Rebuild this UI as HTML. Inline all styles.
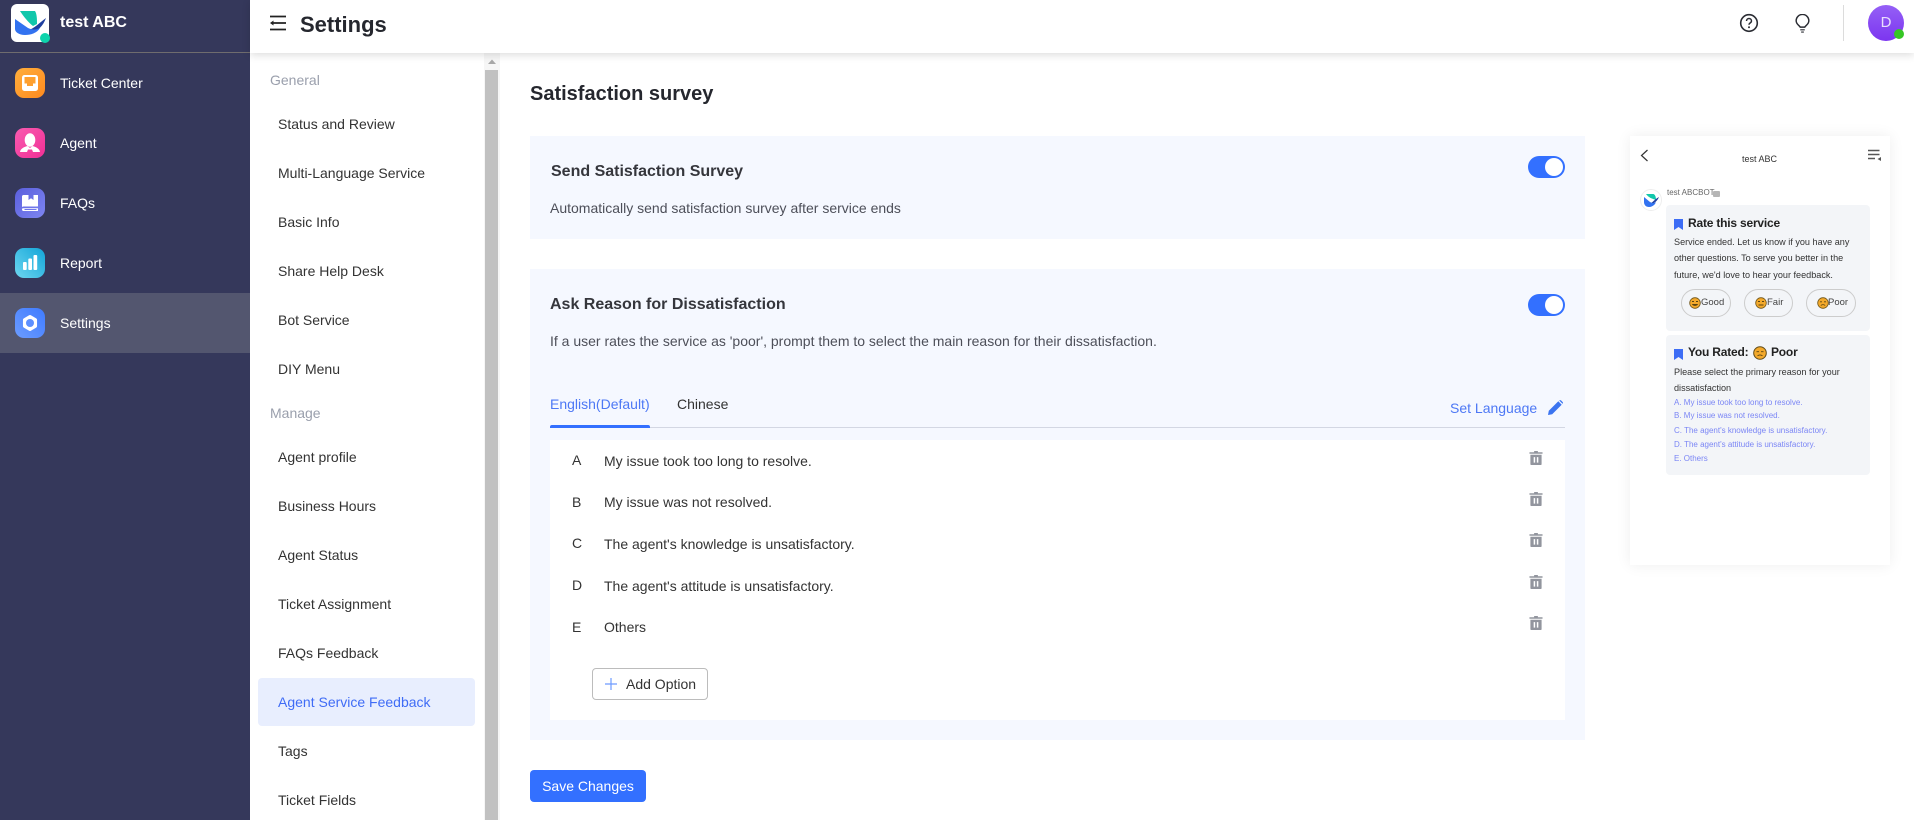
<!DOCTYPE html>
<html><head><meta charset="utf-8"><title>Settings</title>
<style>
*{box-sizing:border-box}
html,body{margin:0;padding:0;width:1914px;height:820px;overflow:hidden;background:#fff;font-family:"Liberation Sans",sans-serif;font-size:14px;color:#333}
.a{position:absolute}
.t{position:absolute;white-space:nowrap;line-height:20px}
.ic{position:absolute;left:15px;width:30px;height:30px;border-radius:9px}
.ic svg{display:block}
.nav{position:absolute;left:60px;color:#fff;font-size:14px;line-height:20px;white-space:nowrap}
.sub{position:absolute;left:278px;color:#333;line-height:20px;white-space:nowrap}
.grp{position:absolute;left:270px;color:#9a9fac;line-height:20px}
.sw{position:absolute;left:1528px;width:37px;height:22px;border-radius:11px;background:#3370ff}
.sw i{position:absolute;right:2px;top:2px;width:18px;height:18px;border-radius:50%;background:#fff}
.l{position:absolute;left:572px;line-height:20px;color:#333}
.o{position:absolute;left:604px;line-height:20px;color:#333;white-space:nowrap}
.tr{position:absolute;left:1529px}
.pt{position:absolute;left:1674px;font-size:9.1px;line-height:12px;color:#333;white-space:nowrap}
.po{position:absolute;left:1674px;font-size:8px;line-height:12px;color:#7b86f5;white-space:nowrap}
.pb{position:absolute;top:289px;height:27.5px;border:1px solid #ccc;border-radius:14px}
</style></head><body>

<div class="a" style="left:0;top:0;width:250px;height:820px;background:#35385b"></div>
<div class="a" style="left:0;top:52px;width:250px;height:1px;background:#6f6c6e"></div>
<div class="a" style="left:0;top:293px;width:250px;height:60px;background:#53566f"></div>

<svg class="a" style="left:11px;top:4px" width="40" height="42" viewBox="0 0 40 42">
<rect x="0" y="0" width="38" height="38" rx="6" fill="#fff"/>
<path d="M9 7H24C26 10 26 16 26 20L22 22C17 18 13 13 9 7Z" fill="#11c7ab"/>
<path d="M35 14C32 22 27 27 20 29L16 26C22 26 28 19 35 14Z" fill="#1f3f9f"/>
<path d="M4 15L17 24C21 26 25 26 29 24C26 29 20 31 14 31C8 31 4 28 4 25Z" fill="#3272f0"/>
<circle cx="34" cy="34" r="5" fill="#0ed3ac"/>
</svg>
<div class="t" style="left:60px;top:13px;color:#fff;font-weight:bold;font-size:16px">test ABC</div>

<div class="ic" style="top:68px;background:linear-gradient(135deg,#ffae3c,#ff8a1f)"><svg width="30" height="30" viewBox="0 0 30 30"><rect x="7" y="7" width="16" height="16" rx="2.500" fill="#fff"/><path d="M9.500 9H20.500V15.500H18V18H12V15.500H9.500Z" fill="#ffa02f"/></svg></div>
<div class="nav" style="top:73px">Ticket Center</div>
<div class="ic" style="top:128px;background:linear-gradient(135deg,#f95bb0,#f12f96)"><svg width="30" height="30" viewBox="0 0 30 30"><ellipse cx="15" cy="12" rx="5.300" ry="6.800" fill="#fff"/><path d="M5 24c.5-3.500 4-5 7.500-6l2.500 2 2.500-2c3.500 1 7 2.500 7.500 6H18l-1-2.500h-4L12 24Z" fill="#fff"/></svg></div>
<div class="nav" style="top:133px">Agent</div>
<div class="ic" style="top:188px;background:linear-gradient(135deg,#5b5fdc,#7d85f2)"><svg width="30" height="30" viewBox="0 0 30 30"><path d="M8.500 7H13.500V12L16 10.300 18.500 12V7H23V18.500H8.500C7.500 18.500 7 18.900 7 19.500V8.500C7 7.700 7.700 7 8.500 7Z" fill="#fff"/><path d="M7.800 20.300H23V23H9C8 23 7 22.600 7 21.600 7 20.800 7.300 20.300 7.800 20.300ZM9.500 21V22H21.500V21Z" fill="#fff" fill-rule="evenodd"/></svg></div>
<div class="nav" style="top:193px">FAQs</div>
<div class="ic" style="top:248px;background:linear-gradient(45deg,#6ed7f0,#13a5d8)"><svg width="30" height="30" viewBox="0 0 30 30"><rect x="8" y="14" width="3.700" height="8" rx="1" fill="#fff"/><rect x="13.300" y="10.500" width="3.700" height="11.500" rx="1" fill="#fff"/><rect x="18.500" y="7" width="3.700" height="15" rx="1" fill="#fff"/></svg></div>
<div class="nav" style="top:253px">Report</div>
<div class="ic" style="top:308px;background:linear-gradient(45deg,#6c9cff,#3f7bff)"><svg width="30" height="30" viewBox="0 0 30 30"><path d="M15 8.800L20.300 11.900V18.100L15 21.200L9.700 18.100V11.900Z" fill="#fff" stroke="#fff" stroke-width="3.500" stroke-linejoin="round"/><circle cx="15" cy="15" r="4" fill="#5d90ff"/></svg></div>
<div class="nav" style="top:313px">Settings</div>

<!-- sub nav -->
<div class="a" style="left:484px;top:53px;width:16px;height:767px;background:#f6f6f6"></div>
<div class="a" style="left:485px;top:70px;width:13px;height:750px;background:#c1c1c1"></div>
<svg class="a" style="left:487px;top:58px" width="10" height="7"><path d="M1 6L5 1.500L9 6Z" fill="#a8a8a8"/></svg>

<div class="grp" style="top:70px">General</div>
<div class="sub" style="top:114px">Status and Review</div>
<div class="sub" style="top:163px">Multi-Language Service</div>
<div class="sub" style="top:212px">Basic Info</div>
<div class="sub" style="top:261px">Share Help Desk</div>
<div class="sub" style="top:310px">Bot Service</div>
<div class="sub" style="top:359px">DIY Menu</div>
<div class="grp" style="top:403px">Manage</div>
<div class="sub" style="top:447px">Agent profile</div>
<div class="sub" style="top:496px">Business Hours</div>
<div class="sub" style="top:545px">Agent Status</div>
<div class="sub" style="top:594px">Ticket Assignment</div>
<div class="sub" style="top:643px">FAQs Feedback</div>
<div class="a" style="left:258px;top:678px;width:217px;height:48px;background:#e8eefe;border-radius:4px"></div>
<div class="sub" style="top:692px;color:#3f6cf6">Agent Service Feedback</div>
<div class="sub" style="top:741px">Tags</div>
<div class="sub" style="top:790px">Ticket Fields</div>

<!-- header -->
<div class="a" style="left:250px;top:0;width:1664px;height:53px;background:#fff;box-shadow:0 2px 8px rgba(0,0,0,.14)"></div>
<svg class="a" style="left:270px;top:15px" width="16" height="16" viewBox="0 0 16 16"><path d="M0 1.500H16M2.500 8H16M0 14.500H16" stroke="#222" stroke-width="1.800" fill="none"/><path d="M0 8L3.500 5.500V10.500Z" fill="#222"/></svg>
<div class="t" style="left:300px;top:11px;font-size:22px;line-height:28px;font-weight:bold;color:#25272e">Settings</div>
<svg class="a" style="left:1739px;top:13px" width="20" height="20" viewBox="0 0 20 20"><circle cx="10" cy="10" r="8.300" fill="none" stroke="#2a2c33" stroke-width="1.600"/><path d="M7.500 8c0-3.300 5-3.300 5 0 0 2-2.500 1.800-2.500 3.800" fill="none" stroke="#2a2c33" stroke-width="1.500"/><circle cx="10" cy="14.300" r="1" fill="#2a2c33"/></svg>
<svg class="a" style="left:1795px;top:14px" width="15" height="19" viewBox="0 0 16 21"><path d="M5.500 14.500C4.500 12.500 1 11.500 1 7.500a7 7 0 0 1 14 0c0 4-3.500 5-4.500 7Z" fill="none" stroke="#2a2c33" stroke-width="1.600"/><path d="M5.500 17.500H10.500M6.500 20H9.500" stroke="#2a2c33" stroke-width="1.300"/></svg>
<div class="a" style="left:1843px;top:5px;width:1px;height:36px;background:#dcdcdc"></div>
<div class="a" style="left:1868px;top:5px;width:36px;height:36px;border-radius:50%;background:linear-gradient(180deg,#9560f6,#7c35f0);color:#e9defc;text-align:center;line-height:36px;font-size:15px">D</div>
<div class="a" style="left:1894px;top:29px;width:10px;height:10px;border-radius:50%;background:#36c624"></div>

<!-- main -->
<div class="t" style="left:530px;top:81px;font-size:20px;line-height:26px;font-weight:bold;color:#25272e">Satisfaction survey</div>

<div class="a" style="left:530px;top:136px;width:1055px;height:103px;background:#f5f8ff"></div>
<div class="t" style="left:551px;top:162px;font-size:16px;font-weight:bold;color:#35363c">Send Satisfaction Survey</div>
<div class="t" style="left:550px;top:198px;color:#4d4f59">Automatically send satisfaction survey after service ends</div>
<div class="sw" style="top:156px"><i></i></div>

<div class="a" style="left:530px;top:269px;width:1055px;height:471px;background:#f5f8ff"></div>
<div class="t" style="left:550px;top:295px;font-size:16px;font-weight:bold;color:#35363c">Ask Reason for Dissatisfaction</div>
<div class="t" style="left:550px;top:331px;color:#4d4f59">If a user rates the service as 'poor', prompt them to select the main reason for their dissatisfaction.</div>
<div class="sw" style="top:294px"><i></i></div>

<div class="t" style="left:550px;top:394px;color:#4d78f5">English(Default)</div>
<div class="t" style="left:677px;top:394px;color:#333">Chinese</div>
<div class="a" style="left:550px;top:427px;width:1015px;height:1px;background:#d3d7e3"></div>
<div class="a" style="left:550px;top:425px;width:100px;height:3px;background:#3370ff;border-radius:2px 2px 0 0"></div>
<div class="t" style="left:1450px;top:398px;color:#4d78f5">Set Language</div>
<svg class="a" style="left:1548px;top:400px" width="15" height="15" viewBox="0 0 15 15"><path d="M0 15L.8 10.800 10.300 1.300 13.700 4.700 4.200 14.200ZM11.200.5C11.800 0 12.500 0 13 .4L14.600 2C15.100 2.500 15.100 3.200 14.500 3.800Z" fill="#3b74f0"/></svg>

<div class="a" style="left:550px;top:440px;width:1015px;height:280px;background:#fff"></div>
<div class="l" style="top:450px">A</div><div class="o" style="top:451px">My issue took too long to resolve.</div>
<div class="l" style="top:492px">B</div><div class="o" style="top:492px">My issue was not resolved.</div>
<div class="l" style="top:533px">C</div><div class="o" style="top:534px">The agent's knowledge is unsatisfactory.</div>
<div class="l" style="top:575px">D</div><div class="o" style="top:576px">The agent's attitude is unsatisfactory.</div>
<div class="l" style="top:617px">E</div><div class="o" style="top:617px">Others</div>

<svg class="tr" style="top:451px" width="14" height="14" viewBox="0 0 15 15"><path d="M5.500 0h4v1.300h5V3H.5V1.300h5ZM1.500 4h12v10c0 .6-.4 1-1 1h-10c-.6 0-1-.4-1-1ZM5 6.500v6h1.600v-6ZM8.400 6.500v6H10v-6Z" fill="#92959e" fill-rule="evenodd"/></svg>
<svg class="tr" style="top:492px" width="14" height="14" viewBox="0 0 15 15"><path d="M5.500 0h4v1.300h5V3H.5V1.300h5ZM1.500 4h12v10c0 .6-.4 1-1 1h-10c-.6 0-1-.4-1-1ZM5 6.500v6h1.600v-6ZM8.400 6.500v6H10v-6Z" fill="#92959e" fill-rule="evenodd"/></svg>
<svg class="tr" style="top:533px" width="14" height="14" viewBox="0 0 15 15"><path d="M5.500 0h4v1.300h5V3H.5V1.300h5ZM1.500 4h12v10c0 .6-.4 1-1 1h-10c-.6 0-1-.4-1-1ZM5 6.500v6h1.600v-6ZM8.400 6.500v6H10v-6Z" fill="#92959e" fill-rule="evenodd"/></svg>
<svg class="tr" style="top:575px" width="14" height="14" viewBox="0 0 15 15"><path d="M5.500 0h4v1.300h5V3H.5V1.300h5ZM1.500 4h12v10c0 .6-.4 1-1 1h-10c-.6 0-1-.4-1-1ZM5 6.500v6h1.600v-6ZM8.400 6.500v6H10v-6Z" fill="#92959e" fill-rule="evenodd"/></svg>
<svg class="tr" style="top:616px" width="14" height="14" viewBox="0 0 15 15"><path d="M5.500 0h4v1.300h5V3H.5V1.300h5ZM1.500 4h12v10c0 .6-.4 1-1 1h-10c-.6 0-1-.4-1-1ZM5 6.500v6h1.600v-6ZM8.400 6.500v6H10v-6Z" fill="#92959e" fill-rule="evenodd"/></svg>

<div class="a" style="left:592px;top:668px;width:116px;height:32px;border:1px solid #bcbcbc;border-radius:4px;background:#fff"></div>
<svg class="a" style="left:605px;top:678px" width="12" height="12"><path d="M6 0V12M0 6H12" stroke="#6d9bff" stroke-width="1.200"/></svg>
<div class="t" style="left:626px;top:674px;color:#333">Add Option</div>

<div class="a" style="left:530px;top:770px;width:116px;height:32px;background:#3370ff;border-radius:4px;color:#fff;text-align:center;line-height:32px">Save Changes</div>

<!-- preview -->
<div class="a" style="left:1630px;top:136px;width:260px;height:429px;background:#fff;box-shadow:0 0 14px rgba(0,0,0,.07)"></div>
<svg class="a" style="left:1640px;top:149px" width="9" height="13"><path d="M7.500 1L1.500 6.500L7.500 12" fill="none" stroke="#333" stroke-width="1.200"/></svg>
<div class="t" style="left:1742px;top:153px;font-size:9px;line-height:12px;color:#333">test ABC</div>
<svg class="a" style="left:1868px;top:149px" width="14" height="13"><path d="M0 1.500H11.500M0 5.500H11.500M0 9.500H7" stroke="#555" stroke-width="1.500"/><path d="M9.500 10L13 8V12Z" fill="#555"/></svg>
<svg class="a" style="left:1640px;top:189px" width="22" height="22" viewBox="0 0 22 22"><circle cx="11" cy="11" r="10.500" fill="#fff" stroke="#eee"/><path d="M6 5H13C15 5 16 8 16 11C12 10 8 8 6 5Z" fill="#11c7ab"/><path d="M19 8C17 13 13 15 10 15C13 13 15 10 19 8Z" fill="#1f3f9f"/><path d="M4 8L10 13C13 14.500 15 14 16 13C15 16 12 18 9 18C6 18 4 16 4 13Z" fill="#3272f0"/></svg>
<div class="t" style="left:1667px;top:187px;font-size:8px;line-height:12px;color:#666">test ABCBOT</div>
<div class="a" style="left:1713px;top:191px;width:7px;height:6px;background:#b5b5b5;border-radius:1px"></div>

<div class="a" style="left:1666px;top:205px;width:204px;height:126px;background:#f3f5f8;border-radius:4px"></div>
<svg class="a" style="left:1674px;top:219px" width="9" height="11"><path d="M0 0H9V11L4.500 8L0 11Z" fill="#3d6df5"/></svg>
<div class="t" style="left:1688px;top:216px;font-size:12px;line-height:14px;color:#222;font-weight:bold;letter-spacing:-.2px">Rate this service</div>
<div class="pt" style="top:236px">Service ended. Let us know if you have any</div>
<div class="pt" style="top:252px">other questions. To serve you better in the</div>
<div class="pt" style="top:269px">future, we'd love to hear your feedback.</div>
<div class="pb" style="left:1681px;width:50px"></div>
<div class="pb" style="left:1744px;width:49px"></div>
<div class="pb" style="left:1806px;width:50px"></div>
<svg class="a" style="left:1689px;top:297px" width="12" height="12" viewBox="0 0 12 12"><circle cx="6" cy="6" r="5.300" fill="#f3a92b" stroke="#6f5518" stroke-width=".8"/><path d="M3 4.500H5M7 4.500H9" stroke="#5a4412" stroke-width=".9"/><path d="M3 7H9C8.500 9.500 3.500 9.500 3 7Z" fill="#5a4412"/></svg>
<div class="t" style="left:1701px;top:297px;font-size:9.500px;line-height:12px;color:#444">Good</div>
<svg class="a" style="left:1755px;top:297px" width="12" height="12" viewBox="0 0 12 12"><circle cx="6" cy="6" r="5.300" fill="#f3a92b" stroke="#6f5518" stroke-width=".8"/><path d="M3 4.500H5M7 4.500H9M3.500 8H8.500" stroke="#5a4412" stroke-width=".9"/></svg>
<div class="t" style="left:1767px;top:297px;font-size:9.500px;line-height:12px;color:#444">Fair</div>
<svg class="a" style="left:1817px;top:297px" width="12" height="12" viewBox="0 0 12 12"><circle cx="6" cy="6" r="5.300" fill="#f3a92b" stroke="#6f5518" stroke-width=".8"/><path d="M3 4.800H5M7 4.800H9M3.800 8.500C5 7.300 7 7.300 8.200 8.500" stroke="#5a4412" stroke-width=".8" fill="none"/></svg>
<div class="t" style="left:1828px;top:297px;font-size:9.500px;line-height:12px;color:#444">Poor</div>

<div class="a" style="left:1666px;top:335px;width:204px;height:140px;background:#f3f5f8;border-radius:4px"></div>
<svg class="a" style="left:1674px;top:349px" width="9" height="11"><path d="M0 0H9V11L4.500 8L0 11Z" fill="#3d6df5"/></svg>
<div class="t" style="left:1688px;top:345px;font-size:12px;line-height:14px;color:#222;font-weight:bold;letter-spacing:-.2px">You Rated:</div>
<svg class="a" style="left:1753px;top:346px" width="14" height="14" viewBox="0 0 14 14"><circle cx="7" cy="7" r="6.300" fill="#f3a92b" stroke="#5f4a18"/><path d="M3.500 5.700H6M8 5.700H10.500M4.500 9.800C6 8.800 8 8.800 9.500 9.800" stroke="#5a4412" stroke-width=".9" fill="none"/></svg>
<div class="t" style="left:1771px;top:345px;font-size:12px;line-height:14px;color:#222;font-weight:bold;letter-spacing:-.2px">Poor</div>
<div class="pt" style="top:366px">Please select the primary reason for your</div>
<div class="pt" style="top:382px">dissatisfaction</div>
<div class="po" style="top:397px">A. My issue took too long to resolve.</div>
<div class="po" style="top:410px">B. My issue was not resolved.</div>
<div class="po" style="top:425px">C. The agent's knowledge is unsatisfactory.</div>
<div class="po" style="top:439px">D. The agent's attitude is unsatisfactory.</div>
<div class="po" style="top:453px">E. Others</div>
</body></html>
